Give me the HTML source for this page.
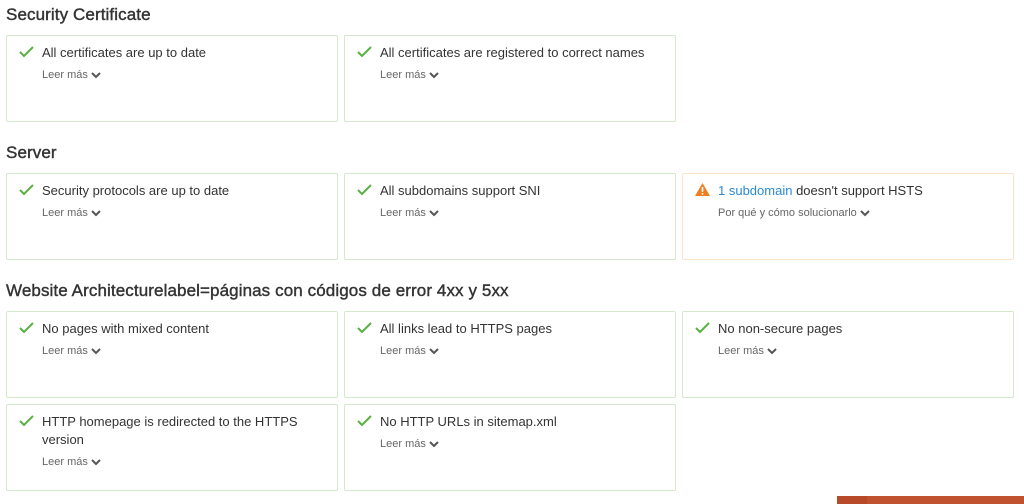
<!DOCTYPE html><html><head><style>
body{margin:0;width:1024px;height:504px;overflow:hidden;background:#fff;font-family:"Liberation Sans",sans-serif;position:relative}
h2{position:absolute;left:6px;margin:0;font-size:17px;font-weight:normal;color:#333;letter-spacing:.1px;-webkit-text-stroke:.4px #333}
.c{position:absolute;width:332px;height:87px;border:1px solid #d3e8cd;border-radius:2px;box-sizing:border-box}
.c.w{border-color:#fbe2cc}
.t{position:absolute;left:35px;top:8px;font-size:13px;color:#333;line-height:18px;width:280px}
.ic{position:absolute;left:12px;top:10px}
.m{position:absolute;left:35px;top:33px;font-size:11px;color:#666}
.m svg{vertical-align:middle;margin-left:3px}
a{color:#2b8ad6;text-decoration:none}
</style></head><body>
<h2 style="top:5px">Security Certificate</h2>
<h2 style="top:143px">Server</h2>
<h2 style="top:281px">Website Architecturelabel=páginas con códigos de error 4xx y 5xx</h2>

<div class="c" style="left:6px;top:35px"><svg class="ic" width="15" height="12"><path d="M1 6l4 4 9-9" stroke="#59b142" stroke-width="2" fill="none"/></svg><div class="t">All certificates are up to date</div><div class="m">Leer más<svg width="10" height="7"><path d="M1 1l4 4 4-4" stroke="#555" stroke-width="2" fill="none"/></svg></div></div>
<div class="c" style="left:344px;top:35px"><svg class="ic" width="15" height="12"><path d="M1 6l4 4 9-9" stroke="#59b142" stroke-width="2" fill="none"/></svg><div class="t">All certificates are registered to correct names</div><div class="m">Leer más<svg width="10" height="7"><path d="M1 1l4 4 4-4" stroke="#555" stroke-width="2" fill="none"/></svg></div></div>

<div class="c" style="left:6px;top:173px"><svg class="ic" width="15" height="12"><path d="M1 6l4 4 9-9" stroke="#59b142" stroke-width="2" fill="none"/></svg><div class="t">Security protocols are up to date</div><div class="m">Leer más<svg width="10" height="7"><path d="M1 1l4 4 4-4" stroke="#555" stroke-width="2" fill="none"/></svg></div></div>
<div class="c" style="left:344px;top:173px"><svg class="ic" width="15" height="12"><path d="M1 6l4 4 9-9" stroke="#59b142" stroke-width="2" fill="none"/></svg><div class="t">All subdomains support SNI</div><div class="m">Leer más<svg width="10" height="7"><path d="M1 1l4 4 4-4" stroke="#555" stroke-width="2" fill="none"/></svg></div></div>
<div class="c w" style="left:682px;top:173px"><svg class="ic" width="15" height="13" style="top:9px"><path d="M7.5 0L15 13H0z" fill="#f07f1f"/><rect x="6.7" y="4" width="1.6" height="5" fill="#fff"/><rect x="6.7" y="10" width="1.6" height="1.6" fill="#fff"/></svg><div class="t"><a>1 subdomain</a> doesn't support HSTS</div><div class="m">Por qué y cómo solucionarlo<svg width="10" height="7"><path d="M1 1l4 4 4-4" stroke="#555" stroke-width="2" fill="none"/></svg></div></div>

<div class="c" style="left:6px;top:311px"><svg class="ic" width="15" height="12"><path d="M1 6l4 4 9-9" stroke="#59b142" stroke-width="2" fill="none"/></svg><div class="t">No pages with mixed content</div><div class="m">Leer más<svg width="10" height="7"><path d="M1 1l4 4 4-4" stroke="#555" stroke-width="2" fill="none"/></svg></div></div>
<div class="c" style="left:344px;top:311px"><svg class="ic" width="15" height="12"><path d="M1 6l4 4 9-9" stroke="#59b142" stroke-width="2" fill="none"/></svg><div class="t">All links lead to HTTPS pages</div><div class="m">Leer más<svg width="10" height="7"><path d="M1 1l4 4 4-4" stroke="#555" stroke-width="2" fill="none"/></svg></div></div>
<div class="c" style="left:682px;top:311px"><svg class="ic" width="15" height="12"><path d="M1 6l4 4 9-9" stroke="#59b142" stroke-width="2" fill="none"/></svg><div class="t">No non-secure pages</div><div class="m">Leer más<svg width="10" height="7"><path d="M1 1l4 4 4-4" stroke="#555" stroke-width="2" fill="none"/></svg></div></div>

<div class="c" style="left:6px;top:404px"><svg class="ic" width="15" height="12"><path d="M1 6l4 4 9-9" stroke="#59b142" stroke-width="2" fill="none"/></svg><div class="t">HTTP homepage is redirected to the HTTPS version</div><div class="m" style="top:51px">Leer más<svg width="10" height="7"><path d="M1 1l4 4 4-4" stroke="#555" stroke-width="2" fill="none"/></svg></div></div>
<div class="c" style="left:344px;top:404px"><svg class="ic" width="15" height="12"><path d="M1 6l4 4 9-9" stroke="#59b142" stroke-width="2" fill="none"/></svg><div class="t">No HTTP URLs in sitemap.xml</div><div class="m">Leer más<svg width="10" height="7"><path d="M1 1l4 4 4-4" stroke="#555" stroke-width="2" fill="none"/></svg></div></div>

<div style="position:absolute;left:837px;top:496px;width:187px;height:8px;background:#c0522f"></div>
<div style="position:absolute;left:837px;top:496px;width:30px;height:8px;background:#b84a2a"></div>
</body></html>
